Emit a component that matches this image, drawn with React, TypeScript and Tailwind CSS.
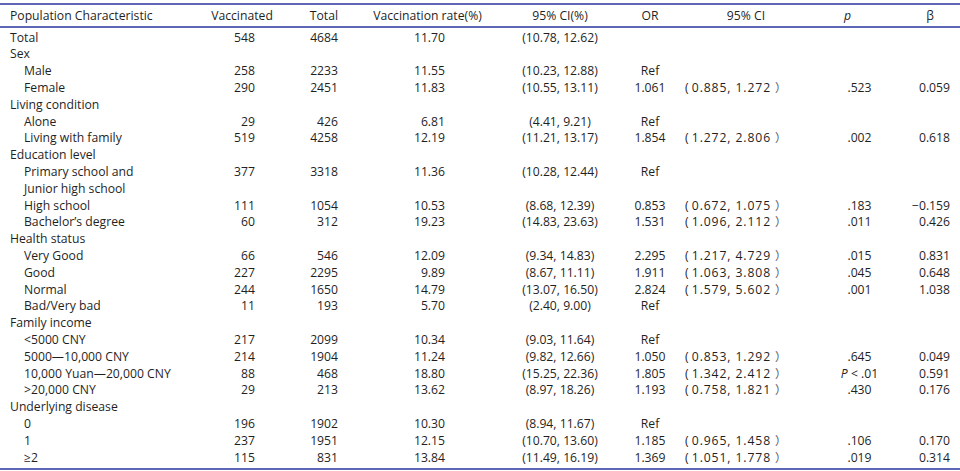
import React from "react";

type Row = {
  label: string;
  indent?: boolean;
  v?: string;
  t?: string;
  r?: string;
  ci?: string;
  or?: string;
  ci2?: string;
  p?: React.ReactNode;
  b?: string;
};

const rows: Row[] = [
  { label: "Total", v: "548", t: "4684", r: "11.70", ci: "(10.78, 12.62)" },
  { label: "Sex" },
  { label: "Male", indent: true, v: "258", t: "2233", r: "11.55", ci: "(10.23, 12.88)", or: "Ref" },
  { label: "Female", indent: true, v: "290", t: "2451", r: "11.83", ci: "(10.55, 13.11)", or: "1.061", ci2: "0.885, 1.272", p: ".523", b: "0.059" },
  { label: "Living condition" },
  { label: "Alone", indent: true, v: "29", t: "426", r: "6.81", ci: "(4.41, 9.21)", or: "Ref" },
  { label: "Living with family", indent: true, v: "519", t: "4258", r: "12.19", ci: "(11.21, 13.17)", or: "1.854", ci2: "1.272, 2.806", p: ".002", b: "0.618" },
  { label: "Education level" },
  { label: "Primary school and", indent: true, v: "377", t: "3318", r: "11.36", ci: "(10.28, 12.44)", or: "Ref" },
  { label: "Junior high school", indent: true },
  { label: "High school", indent: true, v: "111", t: "1054", r: "10.53", ci: "(8.68, 12.39)", or: "0.853", ci2: "0.672, 1.075", p: ".183", b: "\u22120.159" },
  { label: "Bachelor\u2019s degree", indent: true, v: "60", t: "312", r: "19.23", ci: "(14.83, 23.63)", or: "1.531", ci2: "1.096, 2.112", p: ".011", b: "0.426" },
  { label: "Health status" },
  { label: "Very Good", indent: true, v: "66", t: "546", r: "12.09", ci: "(9.34, 14.83)", or: "2.295", ci2: "1.217, 4.729", p: ".015", b: "0.831" },
  { label: "Good", indent: true, v: "227", t: "2295", r: "9.89", ci: "(8.67, 11.11)", or: "1.911", ci2: "1.063, 3.808", p: ".045", b: "0.648" },
  { label: "Normal", indent: true, v: "244", t: "1650", r: "14.79", ci: "(13.07, 16.50)", or: "2.824", ci2: "1.579, 5.602", p: ".001", b: "1.038" },
  { label: "Bad/Very bad", indent: true, v: "11", t: "193", r: "5.70", ci: "(2.40, 9.00)", or: "Ref" },
  { label: "Family income" },
  { label: "<5000 CNY", indent: true, v: "217", t: "2099", r: "10.34", ci: "(9.03, 11.64)", or: "Ref" },
  { label: "5000\u201410,000 CNY", indent: true, v: "214", t: "1904", r: "11.24", ci: "(9.82, 12.66)", or: "1.050", ci2: "0.853, 1.292", p: ".645", b: "0.049" },
  {
    label: "10,000 Yuan\u201420,000 CNY",
    indent: true,
    v: "88",
    t: "468",
    r: "18.80",
    ci: "(15.25, 22.36)",
    or: "1.805",
    ci2: "1.342, 2.412",
    p: (
      <>
        <span className="italic">P</span> &lt; .01
      </>
    ),
    b: "0.591",
  },
  { label: ">20,000 CNY", indent: true, v: "29", t: "213", r: "13.62", ci: "(8.97, 18.26)", or: "1.193", ci2: "0.758, 1.821", p: ".430", b: "0.176" },
  { label: "Underlying disease" },
  { label: "0", indent: true, v: "196", t: "1902", r: "10.30", ci: "(8.94, 11.67)", or: "Ref" },
  { label: "1", indent: true, v: "237", t: "1951", r: "12.15", ci: "(10.70, 13.60)", or: "1.185", ci2: "0.965, 1.458", p: ".106", b: "0.170" },
  { label: "\u22652", indent: true, v: "115", t: "831", r: "13.84", ci: "(11.49, 16.19)", or: "1.369", ci2: "1.051, 1.778", p: ".019", b: "0.314" },
];

const grid =
  "grid grid-cols-[200px_84px_66px_155px_110px_70px_122px_93px_60px]";

export default function App() {
  return (
    <div
      className="w-[960px] h-[471px] bg-white overflow-hidden text-[#1f1f1f] text-[12.2px] leading-none"
      style={{ fontFamily: '"Open Sans", "Noto Sans CJK SC", sans-serif' }}
    >
      <div className="h-[2.5px]" />
      <div className="h-[2px] bg-[#5f66b8]" />
      <div className={`${grid} h-[21.5px] items-center pt-[1px]`}>
        <div className="pl-[10px] whitespace-nowrap">Population Characteristic</div>
        <div className="text-center">Vaccinated</div>
        <div className="text-right pr-[12px]">Total</div>
        <div className="text-center whitespace-nowrap">Vaccination rate(%)</div>
        <div className="text-center">95% CI(%)</div>
        <div className="text-center">OR</div>
        <div className="text-center">95% CI</div>
        <div className="text-center pr-[12px] italic">p</div>
        <div className="text-center">β</div>
      </div>
      <div className="h-[2px] bg-[#5f66b8]" />
      <div className="pt-[1.3px]">
        {rows.map((r, i) => (
          <div key={i} className={`${grid} h-[16.8px] items-center`}>
            <div className={`${r.indent ? "pl-[24px]" : "pl-[10px]"} whitespace-nowrap`}>{r.label}</div>
            <div className="text-right pr-[29px]">{r.v}</div>
            <div className="text-right pr-[12px]">{r.t}</div>
            <div className="text-right pr-[60px]">{r.r}</div>
            <div className="text-center whitespace-nowrap">{r.ci}</div>
            <div className="text-center">{r.or}</div>
            <div className="whitespace-nowrap">
              {r.ci2 ? (
                <>
                  (&nbsp;<span className="tracking-[0.9px]">{r.ci2}</span>
                  <span className="text-[11.5px] text-[#555] ml-[4px]">）</span>
                </>
              ) : null}
            </div>
            <div className="text-center pl-[12px] whitespace-nowrap">{r.p}</div>
            <div className="text-right pr-[10px]">{r.b}</div>
          </div>
        ))}
      </div>
      <div className="h-[2px] bg-[#5f66b8] mt-[1.5px]" />
    </div>
  );
}
